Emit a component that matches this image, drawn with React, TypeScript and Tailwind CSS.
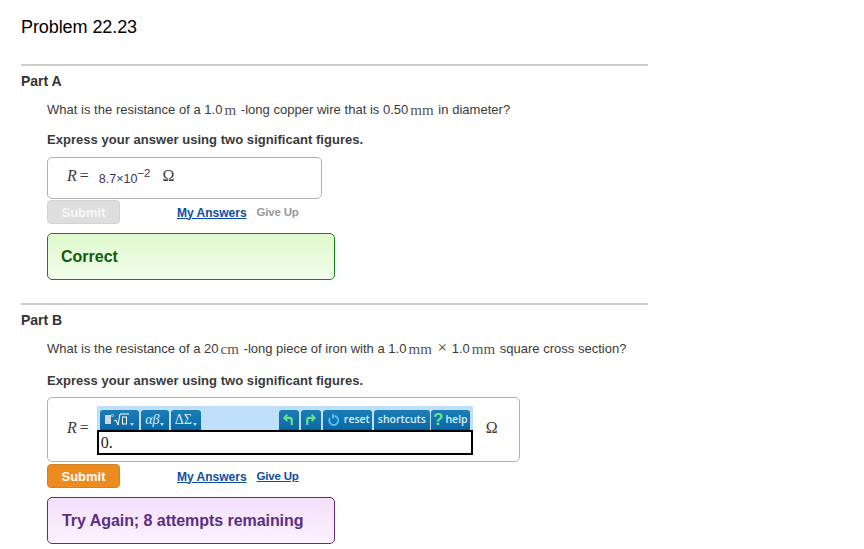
const sans = "font-['Liberation_Sans',Arial,sans-serif]"
const serif = "font-['Liberation_Serif','Times_New_Roman',serif]"
const tool = "font-['Open_Sans',sans-serif] text-[10.5px] font-semibold leading-none text-[#d9eefb]"

function Unit({ children }: { children: string }) {
  return <span className={`${serif} text-[15px] leading-none text-[#555] relative top-[1px] ml-[2px] mr-[1px]`}>{children}</span>
}

function SubmitRow({ active }: { active: boolean }) {
  return (
    <div className="flex items-center h-[24px]">
      <button
        className={`w-[73px] h-[24px] rounded-[4px] border text-[13px] font-bold text-center pt-[1px] ${
          active ? 'bg-[#ee8b1e] border-[#d2812b] text-[#fff]' : 'bg-[#dedede] border-[#d4d4d4] text-[#f7f7f7]'
        }`}
      >
        Submit
      </button>
      <a className="ml-[57px] pt-[1px] text-[12px] font-bold text-[#0b4ea2] underline">My Answers</a>
      <a className={`ml-[10px] pt-[1px] text-[11.5px] font-bold tracking-[-0.2px] ${active ? 'text-[#0b4ea2] underline' : 'text-[#999]'}`}>Give Up</a>
    </div>
  )
}

function ToolButton({ children, className = '' }: { children: React.ReactNode; className?: string }) {
  return (
    <div className={`h-[20px] rounded-t-[3px] bg-gradient-to-b from-[#1b7db8] to-[#0b6aa6] border-b border-[#0a5a90] flex items-center justify-center text-white ${className}`}>
      {children}
    </div>
  )
}

function Caret() {
  return <span className="self-end mb-[3px] ml-[1px] w-0 h-0 border-x-[2.5px] border-x-transparent border-t-[3px] border-t-[#b9dcf5]" />
}

function Toolbar() {
  return (
    <div className="h-[24px] w-[376px] bg-[#bfdffa] flex items-end pl-[3px] gap-[2px]">
      <ToolButton className="w-[39px]">
        <span className="w-[6px] h-[9px] bg-[#cfd8de]" />
        <span className={`${serif} text-[9px] leading-none self-start mt-[3px]`}>°</span>
        <svg width="15" height="13" viewBox="0 0 15 13" fill="none" stroke="#fff" strokeWidth="1">
          <path d="M0 8l2-1 2 5 2-11h9" />
          <rect x="8.5" y="4" width="4" height="7" />
        </svg>
        <Caret />
      </ToolButton>
      <ToolButton className="w-[28px]">
        <span className={`${serif} italic text-[14px] leading-none text-[#d5ecfb]`}>αβ</span>
        <Caret />
      </ToolButton>
      <ToolButton className="w-[30px]">
        <span className={`${serif} text-[14px] leading-none text-[#d5ecfb]`}>ΔΣ</span>
        <Caret />
      </ToolButton>
      <div className="flex-1" />
      <ToolButton className="w-[20px]">
        <svg width="13" height="13" viewBox="0 0 12 12" fill="none" stroke="#6fe08a" strokeWidth="2">
          <path d="M9 11V6.500Q9 4.500 7 4.500H3" />
          <path d="M5 1.500L2 4.500l3 3" strokeWidth="1.600" />
        </svg>
      </ToolButton>
      <ToolButton className="w-[20px]">
        <svg width="13" height="13" viewBox="0 0 12 12" fill="none" stroke="#6fe08a" strokeWidth="2">
          <path d="M3 11V6.500Q3 4.500 5 4.500H9" />
          <path d="M7 1.500L10 4.500l-3 3" strokeWidth="1.600" />
        </svg>
      </ToolButton>
      <ToolButton className="w-[49px] gap-[5px] pl-[2px]">
        <svg width="12" height="14" viewBox="0 0 12 13" fill="none" stroke="#5cc0f5" strokeWidth="1.800">
          <path d="M7.500 2.500A4.500 4.500 0 1 1 3 4.500" />
          <path d="M6 0.500V5" />
        </svg>
        <span className={tool}>reset</span>
      </ToolButton>
      <ToolButton className="w-[56px] !mr-[-1px]">
        <span className={tool}>shortcuts</span>
      </ToolButton>
      <ToolButton className="w-[39px] gap-[2px] mr-[3px]">
        <span className={`${sans} text-[17px] font-bold leading-none text-[#6fe08a]`}>?</span>
        <span className={tool}>help</span>
      </ToolButton>
    </div>
  )
}

export default function App() {
  return (
    <div className={`${sans} w-[864px] h-[549px] bg-white overflow-hidden pl-[21px] text-[13px] text-[#3a3a3a]`}>
      <h1 className="pt-[17px] text-[18px] leading-[20px] tracking-[-0.08px] text-black font-normal">Problem 22.23</h1>

      <section className="mt-[27px] w-[627px] border-t-2 border-[#cccccc]">
        <h2 className="mt-[7px] text-[14px] leading-[16px] font-bold text-[#333]">Part A</h2>
        <div className="ml-[26px]">
          <p className="mt-[12px] h-[17px] leading-[17px] tracking-[0.02px]">
            What is the resistance of a 1.0<Unit>m</Unit> -long copper wire that is 0.50<Unit>mm</Unit> in diameter?
          </p>
          <p className="mt-[13px] leading-[17px] font-bold tracking-[0.04px]">Express your answer using two significant figures.</p>
          <div className="mt-[9px] w-[275px] h-[42px] rounded-[5px] border border-[#b0b0b0] flex items-center pl-[19px]">
            <span className={`${serif} italic text-[16px] relative -top-[2px]`}>R</span>
            <span className={`${serif} text-[16px] ml-[3px] relative -top-[2px]`}>=</span>
            <span className="ml-[10px] text-[12.5px] relative top-[1px] text-[#3d3350]">
              8.7×10<sup className="text-[11.5px] leading-none">−2</sup>
            </span>
            <span className={`${serif} text-[16px] ml-[12px] relative -top-[2px]`}>Ω</span>
          </div>
          <div className="mt-[1px]">
            <SubmitRow active={false} />
          </div>
          <div className="mt-[9px] w-[288px] h-[47px] rounded-[5px] border border-[#17861a] bg-gradient-to-b from-[#dff9cd] to-[#f1fdeb] flex items-center pl-[13px] text-[16px] font-bold text-[#0f5c0f]">
            Correct
          </div>
        </div>
      </section>

      <section className="mt-[23px] w-[627px] border-t-2 border-[#cccccc]">
        <h2 className="mt-[7px] text-[14px] leading-[16px] font-bold text-[#333]">Part B</h2>
        <div className="ml-[26px]">
          <p className="mt-[11px] h-[17px] leading-[17px] tracking-[0.01px]">
            What is the resistance of a 20<Unit>cm</Unit> -long piece of iron with a 1.0<Unit>mm</Unit> <span className={`${serif} text-[17px] leading-none mx-[1px]`}>×</span> 1.0<Unit>mm</Unit> square cross section?
          </p>
          <p className="mt-[16px] leading-[17px] font-bold tracking-[0.04px]">Express your answer using two significant figures.</p>
          <div className="mt-[8px] w-[473px] h-[65px] rounded-[5px] border border-[#b0b0b0] flex items-center pl-[19px]">
            <span className={`${serif} italic text-[16px] relative -top-[2px]`}>R</span>
            <span className={`${serif} text-[16px] ml-[3px] relative -top-[2px]`}>=</span>
            <div className="ml-[8px] pt-[2px] flex flex-col">
              <Toolbar />
              <div className={`${serif} w-[376px] h-[25px] border-2 border-black pl-[2px] text-[16px] leading-[22px] text-[#222]`}>0.</div>
            </div>
            <span className={`${serif} text-[16px] ml-[13px] relative -top-[2px]`}>Ω</span>
          </div>
          <div className="mt-[2px]">
            <SubmitRow active />
          </div>
          <div className="mt-[9px] w-[288px] h-[47px] rounded-[5px] border border-[#5f2d86] bg-gradient-to-b from-[#f4dffc] to-[#fcf2ff] flex items-center pl-[14px] text-[16px] tracking-[-0.05px] font-bold text-[#5b2e82]">
            Try Again; 8 attempts remaining
          </div>
        </div>
      </section>
    </div>
  )
}
